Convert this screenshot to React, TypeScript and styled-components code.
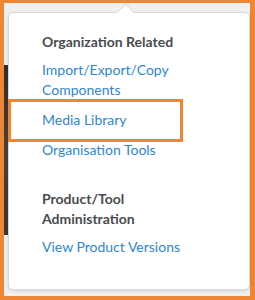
import React from "react";
import styled, { createGlobalStyle } from "styled-components";

const Global = createGlobalStyle`
  html, body { margin: 0; padding: 0; background: #ffffff; }
  body { font-family: Lato, "Noto Sans", sans-serif; }
  * { box-sizing: border-box; }
`;

const Frame = styled.div`
  width: 255px;
  height: 300px;
  border-style: solid;
  border-color: #ef8633;
  border-width: 3px 5px 4px 4px;
  background: #f0f0f0;
  display: flex;
  align-items: stretch;
`;

const PageStrip = styled.div`
  width: 4px;
  flex: 0 0 4px;
  display: flex;
  flex-direction: column;
  padding-top: 62px;
`;

const DarkBar = styled.div`
  height: 170px;
  background: linear-gradient(180deg, #2f2d2c 0%, #4a413a 50%, #3a3633 100%);
`;

const Stage = styled.div`
  flex: 1;
  padding: 9px 0 6px 0;
  display: flex;
`;

const Card = styled.div`
  position: relative;
  flex: 1;
  background: #ffffff;
  border: 1px solid #d6dbe0;
  border-radius: 5px;
  box-shadow: 0 1px 3px rgba(0, 0, 0, 0.12);
  padding: 19px 0 0 0;
  display: flex;
  flex-direction: column;
`;

const Pointer = styled.div`
  position: absolute;
  top: -7px;
  left: 110px;
  width: 13px;
  height: 13px;
  background: #ffffff;
  border-left: 1px solid #d6dbe0;
  border-top: 1px solid #d6dbe0;
  transform: rotate(45deg);
`;

const Group = styled.div<{ $gap: number }>`
  display: flex;
  flex-direction: column;
  margin-top: ${(p) => p.$gap}px;
`;

const Heading = styled.div`
  padding-left: 33px;
  font-size: 14px;
  line-height: 20px;
  font-weight: 700;
  color: #494c4e;
  margin-bottom: 3px;
  width: 170px;
`;

const Item = styled.div`
  position: relative;
  padding: 5px 0 5px 33px;
  font-size: 14px;
  line-height: 20px;
  color: #2f86d1;
  width: 175px;
`;

const Callout = styled.div`
  position: absolute;
  left: -1px;
  top: -6px;
  bottom: -7px;
  width: 175px;
  border: 3px solid #ef8633;
`;

export default function App() {
  return (
    <>
      <Global />
      <Frame>
        <PageStrip>
          <DarkBar />
        </PageStrip>
        <Stage>
          <Card>
            <Pointer />
            <Group $gap={0}>
              <Heading>Organization Related</Heading>
              <Item>Import/Export/Copy Components</Item>
              <Item>
                Media Library
                <Callout />
              </Item>
              <Item>Organisation Tools</Item>
            </Group>
            <Group $gap={24}>
              <Heading>Product/Tool Administration</Heading>
              <Item>View Product Versions</Item>
            </Group>
          </Card>
        </Stage>
      </Frame>
    </>
  );
}
